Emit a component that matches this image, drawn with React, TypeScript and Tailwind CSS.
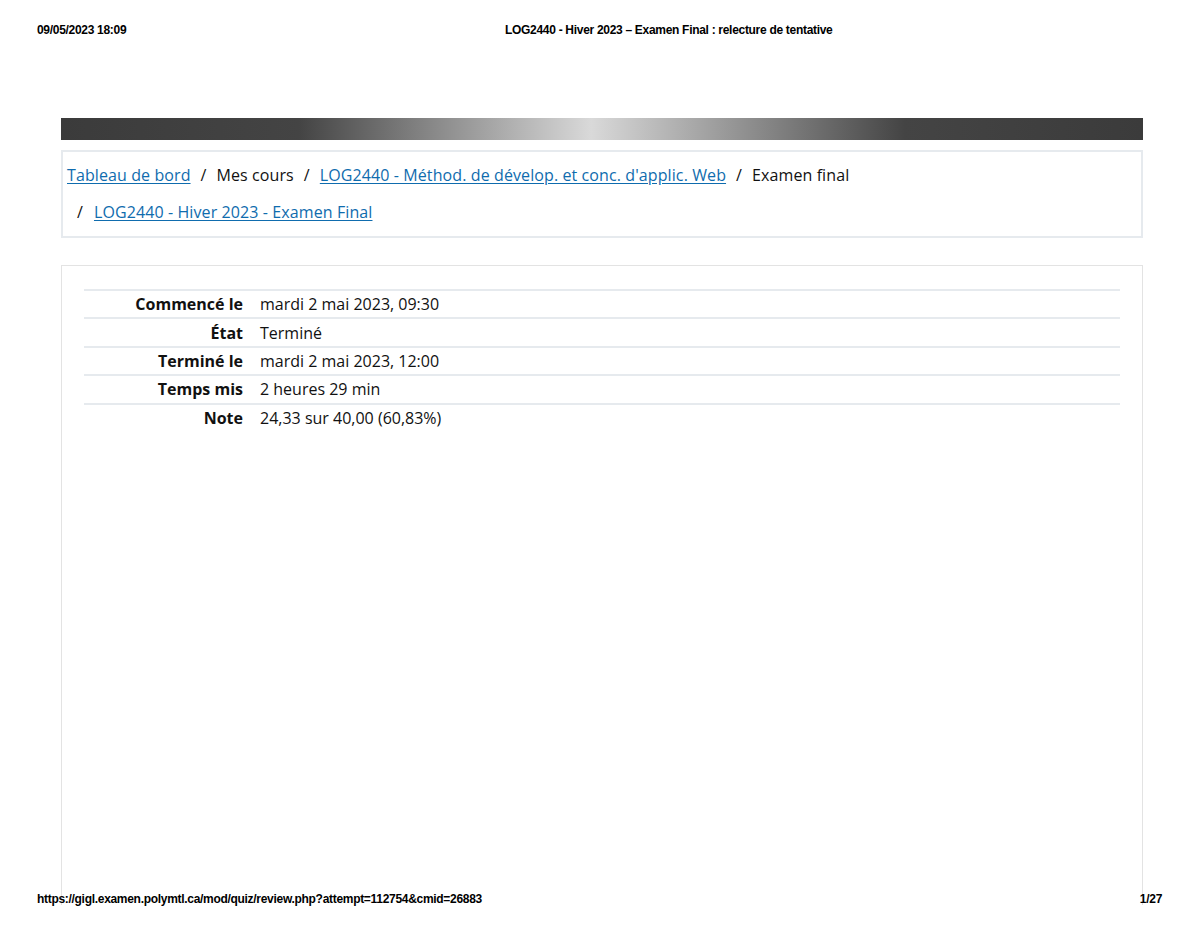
const rows = [
  { label: "Commencé le", value: "mardi 2 mai 2023, 09:30" },
  { label: "État", value: "Terminé" },
  { label: "Terminé le", value: "mardi 2 mai 2023, 12:00" },
  { label: "Temps mis", value: "2 heures 29 min" },
  { label: "Note", value: "24,33 sur 40,00 (60,83%)" },
];

function Sep() {
  return <span className="mx-[10px] text-[#111]">/</span>;
}

function Crumb({ children }: { children: React.ReactNode }) {
  return (
    <a href="#" className="text-[#0f6cae] underline underline-offset-2">
      {children}
    </a>
  );
}

export default function App() {
  return (
    <div className="relative h-[927px] w-[1200px] overflow-hidden bg-white">
      <div className="flex h-[58px] items-start pt-[21px] font-['Liberation_Sans',Arial,sans-serif] text-[12px] font-bold tracking-[-0.3px] text-black">
        <span className="ml-[37px] w-[200px]">09/05/2023 18:09</span>
        <span className="ml-[268px]">LOG2440 - Hiver 2023 – Examen Final : relecture de tentative</span>
      </div>

      <div className="ml-[61px] mr-[57px] mt-[60px] font-['Open_Sans',sans-serif] text-[16px] text-[#111]">
        <div className="h-[22px] bg-[linear-gradient(to_right,#3b3b3b_0%,#444_22%,#d9d9d9_49%,#444_78%,#3b3b3b_100%)]" />

        <div className="mt-[10px] border-2 border-[#e6eaee] px-[4px] pb-[10px] pt-[9px]">
          <div className="flex h-[28px] items-center tracking-[0.1px]">
            <Crumb>Tableau de bord</Crumb>
            <Sep />
            <span>Mes cours</span>
            <Sep />
            <Crumb>LOG2440 - Méthod. de dévelop. et conc. d'applic. Web</Crumb>
            <Sep />
            <span>Examen final</span>
          </div>
          <div className="mt-[9px] flex h-[28px] items-center pl-[10px] tracking-[0.1px]">
            <span className="mr-[11px]">/</span>
            <Crumb>LOG2440 - Hiver 2023 - Examen Final</Crumb>
          </div>
        </div>

        <div className="mt-[27px] h-[640px] border border-b-0 border-[#e3e3e3] px-[22px] pt-[23px]">
          <table className="w-full border-collapse">
            <tbody>
              {rows.map((r) => (
                <tr key={r.label} className="h-[28.4px] border-t-2 border-[#e6eaee]">
                  <th className="w-[176px] pr-[17px] text-right align-middle font-bold">{r.label}</th>
                  <td className="align-middle">{r.value}</td>
                </tr>
              ))}
            </tbody>
          </table>
        </div>
      </div>

      <div className="absolute left-0 top-[890px] flex w-full justify-between pl-[37px] pr-[38px] font-['Liberation_Sans',Arial,sans-serif] text-[12px] font-bold tracking-[-0.3px] text-black">
        <span>https://gigl.examen.polymtl.ca/mod/quiz/review.php?attempt=112754&amp;cmid=26883</span>
        <span>1/27</span>
      </div>
    </div>
  );
}
